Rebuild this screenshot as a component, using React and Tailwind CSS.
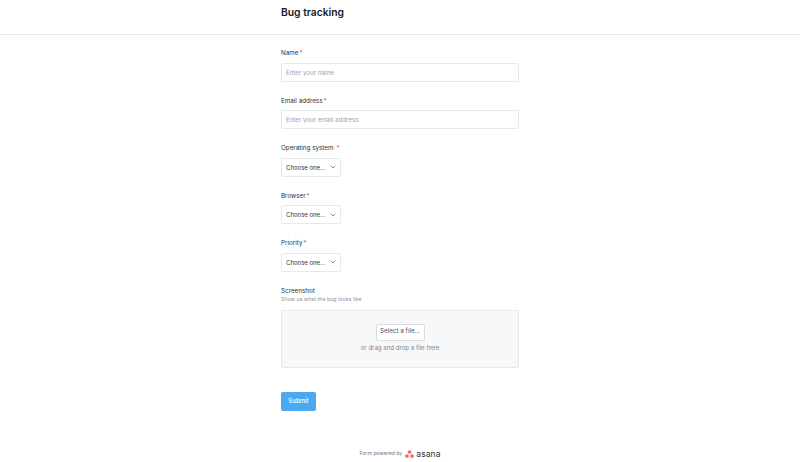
import React from 'react';
import { ChevronDown } from 'lucide-react';

function Label({ text, gap = 'ml-px' }) {
  return (
    <div className="h-[10px] pt-[1px] flex items-center text-[6.3px] leading-[10px] text-[#273240]">
      {text}
      <span className={`${gap} text-[#e8384f]`}>*</span>
    </div>
  );
}

function TextField({ label, placeholder }) {
  return (
    <div className="h-[47.5px]">
      <Label text={label} />
      <input
        placeholder={placeholder}
        className="mt-[5px] block w-full h-[19px] px-[4px] bg-white border border-[#e6e8ec] rounded-[2px] text-[6.2px] placeholder:text-[#9ca3ad] outline-none"
      />
    </div>
  );
}

function SelectField({ label, gap }) {
  return (
    <div className="h-[47.5px]">
      <Label text={label} gap={gap} />
      <div className="mt-[5px] w-[60px] h-[19px] pl-[4px] pr-[3px] flex items-center justify-between bg-white border border-[#e6e8ec] rounded-[2px] text-[6px] text-[#273240] whitespace-nowrap">
        <span>Choose one...</span>
        <ChevronDown className="w-2 h-2 text-[#4b5563]" strokeWidth={2} />
      </div>
    </div>
  );
}

export default function App() {
  return (
    <div className="w-[800px] h-[462px] overflow-hidden bg-white font-['Inter',sans-serif]">
      <header className="h-[35px] border-b border-[#e8eaed]">
        <h1 className="ml-[281px] pt-[4px] text-[10.3px] leading-[16px] font-semibold text-[#151b26]">Bug tracking</h1>
      </header>
      <main className="w-[238px] mx-auto pt-[12.75px]">
        <TextField label="Name" placeholder="Enter your name" />
        <TextField label="Email address" placeholder="Enter your email address" />
        <SelectField label="Operating system" gap="ml-[3px]" />
        <SelectField label="Browser" />
        <SelectField label="Priority" />
        <div className="h-[10px] pt-[1px] flex items-center text-[6.3px] leading-[10px] text-[#273240]">Screenshot</div>
        <p className="h-[9px] flex items-center text-[5.3px] text-[#8a94a0]">Show us what the bug looks like</p>
        <div className="mt-[5.25px] h-[58px] pt-[13px] flex flex-col items-center bg-[#f6f8f9] border border-[#e6e8ec] rounded-[2px]">
          <button className="w-[49px] h-[17px] bg-white border border-[#d9dce1] rounded-[2px] text-[6.3px] text-[#4a5563]">Select a file...</button>
          <p className="mt-[2px] text-[6.1px] leading-[10px] text-[#7d8794]">or drag and drop a file here</p>
        </div>
        <button className="mt-[24px] block w-[35px] h-[19px] bg-[#4aa9f0] rounded-[2px] text-[6.1px] font-medium text-white">Submit</button>
      </main>
      <footer className="mt-[38px] flex items-center justify-center text-[5.2px] text-[#6f7782]">
        <span>Form powered by</span>
        <svg className="ml-[3px] w-[9px] h-[8px]" viewBox="0 0 18 16" fill="#f06a6a">
          <circle cx="9" cy="4" r="3.7" />
          <circle cx="4" cy="12" r="3.7" />
          <circle cx="14" cy="12" r="3.7" />
        </svg>
        <span className="ml-[2px] text-[8.5px] leading-[10px] font-normal tracking-[0.1px] text-[#273240]">asana</span>
      </footer>
    </div>
  );
}
